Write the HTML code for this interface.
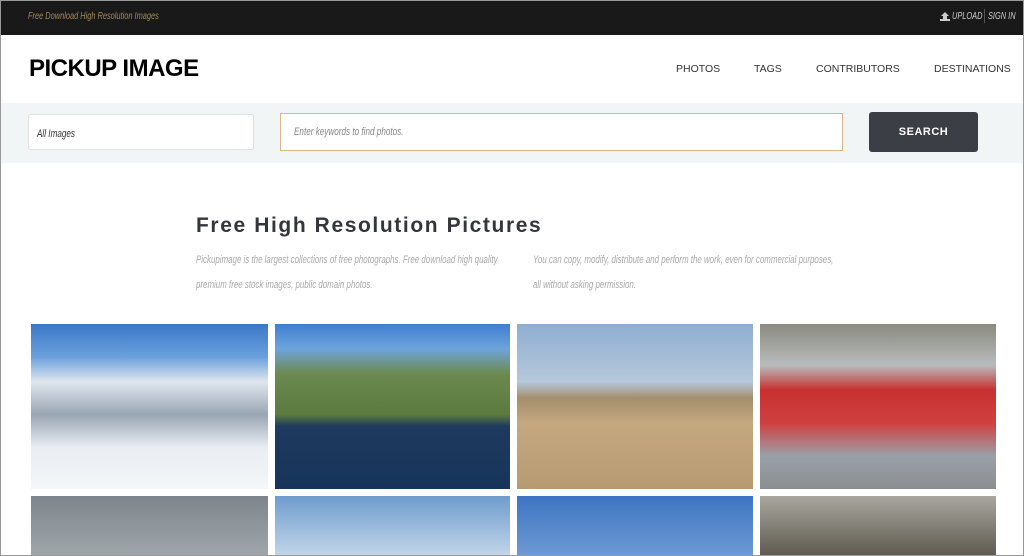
<!DOCTYPE html>
<html><head><style>
*{margin:0;padding:0;box-sizing:border-box}
body{width:1024px;height:556px;overflow:hidden;background:#fff;font-family:"Liberation Sans",sans-serif;position:relative}
.abs{position:absolute}
.cond{font-style:italic;display:inline-block;transform:scaleX(.74);transform-origin:left center;white-space:nowrap}
.top{left:0;top:0;width:1024px;height:35px;background:#19191a}
.nav{font-size:10.5px;color:#333;top:63px}
.img{position:absolute}
.frame{position:absolute;left:0;top:0;width:1024px;height:556px;border:1px solid #999;pointer-events:none}
</style></head><body>
<div class="abs top"></div>
<div class="abs" style="left:28px;top:11px;font-size:10px;color:#a08a5c"><span class="cond">Free Download High Resolution Images</span></div>
<div class="abs" style="left:941px;top:12px;border-left:4px solid transparent;border-right:4px solid transparent;border-bottom:4px solid #ccc;height:0;width:0"></div>
<div class="abs" style="left:943px;top:16px;width:4px;height:3px;background:#ccc"></div>
<div class="abs" style="left:940px;top:19px;width:10px;height:2px;background:#ccc"></div>
<div class="abs" style="left:952px;top:11px;font-size:10px;color:#ccc"><span class="cond">UPLOAD</span></div>
<div class="abs" style="left:984px;top:9px;width:1px;height:14px;background:#555"></div>
<div class="abs" style="left:988px;top:11px;font-size:10px;color:#ccc"><span class="cond">SIGN IN</span></div>
<div class="abs" style="left:29px;top:55px;font-size:24px;font-weight:bold;color:#000;letter-spacing:-0.5px">PICKUP IMAGE</div>
<div class="abs nav" style="left:676px">PHOTOS</div>
<div class="abs nav" style="left:754px">TAGS</div>
<div class="abs nav" style="left:816px">CONTRIBUTORS</div>
<div class="abs nav" style="left:934px">DESTINATIONS</div>
<div class="abs" style="left:0;top:103px;width:1024px;height:60px;background:#f2f5f6"></div>
<div class="abs" style="left:28px;top:114px;width:226px;height:36px;background:#fff;border:1px solid #e0e0e0;border-radius:3px"></div>
<div class="abs" style="left:37px;top:128px;font-size:11px;color:#333"><span class="cond">All Images</span></div>
<div class="abs" style="left:280px;top:113px;width:563px;height:38px;background:#fff;border:1px solid #d8b888"></div>
<div class="abs" style="left:294px;top:126px;font-size:11px;color:#888"><span class="cond">Enter keywords to find photos.</span></div>
<div class="abs" style="left:869px;top:112px;width:109px;height:40px;background:#3b3e44;border-radius:3px;color:#fff;font-size:11px;font-weight:bold;text-align:center;line-height:40px;letter-spacing:.5px">SEARCH</div>
<div class="abs" style="left:196px;top:214px;font-size:21px;font-weight:bold;color:#34363c;letter-spacing:1.6px">Free High Resolution Pictures</div>
<div class="abs" style="left:196px;top:248px;font-size:11px;color:#aaa;line-height:25px"><span class="cond" style="transform:scaleX(.72)">Pickupimage is the largest collections of free photographs. Free download high quality<br>premium free stock images, public domain photos.</span></div>
<div class="abs" style="left:533px;top:248px;font-size:11px;color:#aaa;line-height:25px"><span class="cond" style="transform:scaleX(.72)">You can copy, modify, distribute and perform the work, even for commercial purposes,<br>all without asking permission.</span></div>

<div class="img" style="left:31px;top:324px;width:237px;height:165px;background:linear-gradient(180deg,#3a78c8 0%,#6aa0dc 20%,#dfe6ee 35%,#9aa6b4 55%,#e9eef3 75%,#f4f6f8 100%)"></div>
<div class="img" style="left:275px;top:324px;width:235px;height:165px;background:linear-gradient(180deg,#3f7fd0 0%,#6ea4dc 15%,#6c8a50 30%,#5a7a3e 55%,#1e3a5e 62%,#17345a 100%)"></div>
<div class="img" style="left:517px;top:324px;width:236px;height:165px;background:linear-gradient(180deg,#8eaed2 0%,#b6c8da 35%,#a48e6c 45%,#c4a880 60%,#b89a72 100%)"></div>
<div class="img" style="left:760px;top:324px;width:236px;height:165px;background:linear-gradient(180deg,#8a8a80 0%,#b8bcbc 25%,#c83030 40%,#d04040 60%,#9aa0a8 80%,#8a8e90 100%)"></div>
<div class="img" style="left:31px;top:496px;width:237px;height:60px;background:linear-gradient(180deg,#7d858c,#a0a6aa)"></div>
<div class="img" style="left:275px;top:496px;width:235px;height:60px;background:linear-gradient(180deg,#6f9ccc,#c2d6ea)"></div>
<div class="img" style="left:517px;top:496px;width:236px;height:60px;background:linear-gradient(180deg,#3d74c2,#6e9ad4)"></div>
<div class="img" style="left:760px;top:496px;width:236px;height:60px;background:linear-gradient(180deg,#a8a69e,#5e5a50)"></div>
<div class="frame"></div>
</body></html>
